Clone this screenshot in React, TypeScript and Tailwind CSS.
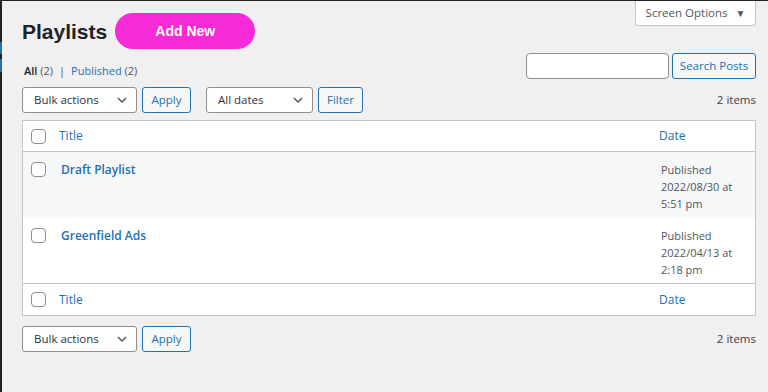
import React from "react";

const rows = [
  { title: "Draft Playlist", date: "2022/08/30 at", time: "5:51 pm", alt: true },
  { title: "Greenfield Ads", date: "2022/04/13 at", time: "2:18 pm", alt: false },
];

const font = { fontFamily: "'Open Sans', 'Noto Sans', sans-serif" };

const Checkbox = () => (
  <span className="block w-[15px] h-[15px] rounded-[4px] border border-[#8c8f94] bg-white" />
);

const Chevron = () => (
  <svg width="12" height="12" viewBox="0 0 12 12" className="text-[#50575e]">
    <path d="M2 4 L6 8 L10 4" fill="none" stroke="currentColor" strokeWidth="1.5" />
  </svg>
);

const Select = ({ label, width }: { label: string; width: string }) => (
  <div
    className={`${width} h-[26px] flex items-center justify-between pl-[11px] pr-[8px] bg-white border border-[#8c8f94] rounded-[3px] text-[11.5px] text-[#2c3338]`}
  >
    <span>{label}</span>
    <Chevron />
  </div>
);

const Button = ({ label, width }: { label: string; width: string }) => (
  <div
    className={`${width} h-[26px] flex items-center justify-center bg-[#f6f7f7] border border-[#2271b1] rounded-[3px] text-[11.5px] text-[#2271b1]`}
  >
    {label}
  </div>
);

const BulkBar = ({ withDates }: { withDates: boolean }) => (
  <div className="flex items-center justify-between">
    <div className="flex items-center">
      <Select label="Bulk actions" width="w-[115px]" />
      <div className="ml-[5px]">
        <Button label="Apply" width="w-[49px]" />
      </div>
      {withDates && (
        <>
          <div className="ml-[15px]">
            <Select label="All dates" width="w-[107px]" />
          </div>
          <div className="ml-[5px]">
            <Button label="Filter" width="w-[45px]" />
          </div>
        </>
      )}
    </div>
    <span className="text-[11.5px] text-[#3c434a]">2 items</span>
  </div>
);

const HeadRow = ({ border }: { border: "b" | "t" }) => (
  <div
    className={`flex items-center ${border === "b" ? "h-[31px] border-b" : "h-[32px] border-t"} border-[#c3c4c7] bg-white`}
  >
    <div className="w-[36px] pl-[8px]">
      <Checkbox />
    </div>
    <div className="flex-1 text-[12px] text-[#2271b1]">Title</div>
    <div className="w-[96px] text-[12px] text-[#2271b1]">Date</div>
  </div>
);

export default function App() {
  return (
    <div className="w-[768px] h-[392px] overflow-hidden bg-[#f0f0f1] flex flex-col" style={font}>
      <div className="h-[1px] bg-[#1d2327]" />
      <div className="flex flex-1">
        {/* admin menu edge */}
        <div className="w-[2px] bg-[#1d2327] flex flex-col">
          <div className="h-[41px]" />
          <div className="h-[12px] bg-[#2271b1]" />
          <div className="h-[5px]" />
          <div className="h-[13px] bg-[#2271b1]" />
        </div>

        <div className="flex-1 pl-[20px] pr-[12px] flex flex-col">
          <div className="flex justify-between items-start">
            <div className="mt-[12px] flex items-center">
              <h1
                className="text-[21px] font-bold text-[#1d2327] leading-none"
                style={{ fontFamily: "'Liberation Sans', Arial, sans-serif" }}
              >
                Playlists
              </h1>
              <div
                className="ml-[8px] w-[140px] h-[36px] rounded-full bg-[#f72ad8] flex items-center justify-center text-white text-[14px] font-bold"
                style={{ fontFamily: "'Liberation Sans', Arial, sans-serif" }}
              >
                Add New
              </div>
            </div>
            <div className="h-[25px] w-[121px] bg-white border border-t-0 border-[#c3c4c7] rounded-b-[4px] flex items-center justify-center gap-[8px] text-[11.5px] text-[#50575e]">
              <span>Screen Options</span>
              <span className="text-[10px] text-[#50575e]">▼</span>
            </div>
          </div>

          <div className="flex justify-between items-end">
            <div className="pl-[2px] text-[11px] leading-[16px] text-[#50575e]">
              <span className="font-semibold text-[#1d2327]">All</span> (2)
              <span className="mx-[6px]">|</span>
              <span className="text-[#2271b1]">Published</span> (2)
            </div>
            <div className="mt-[4px] flex items-center">
              <div className="w-[143px] h-[26px] bg-white border border-[#8c8f94] rounded-[4px]" />
              <div className="ml-[3px]">
                <Button label="Search Posts" width="w-[84px]" />
              </div>
            </div>
          </div>

          <div className="mt-[8px]">
            <BulkBar withDates />
          </div>

          <div className="mt-[7px] border border-[#c3c4c7] bg-white">
            <HeadRow border="b" />
            {rows.map((r, i) => (
              <div
                key={i}
                className={`flex items-start pt-[9px] ${i === 0 ? "h-[66px]" : "h-[65px]"} ${r.alt ? "bg-[#f6f7f7]" : "bg-white"}`}
              >
                <div className="w-[36px] pl-[8px] pt-[1px]">
                  <Checkbox />
                </div>
                <div className="flex-1 pl-[2px] text-[12px] font-semibold leading-[17px] text-[#2271b1]">
                  {r.title}
                </div>
                <div className="w-[95px] pl-[1px] text-[11px] leading-[17px] text-[#50575e]">
                  <div>Published</div>
                  <div>{r.date}</div>
                  <div>{r.time}</div>
                </div>
              </div>
            ))}
            <HeadRow border="t" />
          </div>

          <div className="mt-[10px]">
            <BulkBar withDates={false} />
          </div>
        </div>
      </div>
    </div>
  );
}
